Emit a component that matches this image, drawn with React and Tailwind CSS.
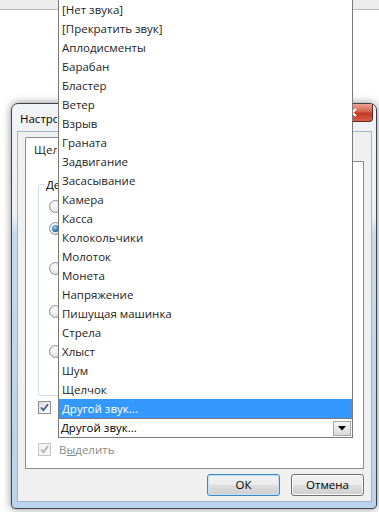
import React from 'react';

const sounds = [
  '[Нет звука]',
  '[Прекратить звук]',
  'Аплодисменты',
  'Барабан',
  'Бластер',
  'Ветер',
  'Взрыв',
  'Граната',
  'Задвигание',
  'Засасывание',
  'Камера',
  'Касса',
  'Колокольчики',
  'Молоток',
  'Монета',
  'Напряжение',
  'Пишущая машинка',
  'Стрела',
  'Хлыст',
  'Шум',
  'Щелчок',
  'Другой звук...',
];

const Radio = ({ checked, className = '' }) => (
  <div className={`w-[13px] h-[13px] rounded-full border border-[#8e9295] bg-[radial-gradient(circle_at_40%_35%,#ffffff,#e2e2e2_70%,#cfcfcf)] flex items-center justify-center ${className}`}>
    {checked && <div className="w-[7px] h-[7px] rounded-full bg-[radial-gradient(circle_at_40%_35%,#9fd4f5,#2a6fa5_60%,#10456e)]" />}
  </div>
);

const CheckBox = ({ disabled }) => (
  <div className={`w-[13px] h-[13px] border flex items-center justify-center ${disabled ? 'border-[#c4c4c4] bg-[#f4f4f4]' : 'border-[#8e8f8f] bg-[linear-gradient(135deg,#dcdcdc,#ffffff)]'}`}>
    <svg width="11" height="11" viewBox="0 0 11 11">
      <path d="M2 5.5 L4.4 8.2 L9 2.3" fill="none" stroke={disabled ? '#b0b0b0' : '#3d5a8a'} strokeWidth="1.8" />
    </svg>
  </div>
);

export default function App() {
  return (
    <div className="relative w-[379px] h-[512px] overflow-hidden bg-white text-[11.5px] text-[#1e1e1e]" style={{ fontFamily: '"Open Sans", "Noto Sans", sans-serif' }}>
      {/* window behind */}
      <div className="h-[10px] bg-[#ededed] border-b border-[#bdbdbd]" />

      {/* dialog */}
      <div className="absolute left-[11px] top-[103px] w-[366px] h-[406px] rounded-t-[7px] rounded-b-[4px] border border-[#3e4247] bg-[linear-gradient(180deg,#f1f3f6_0%,#ebf0f5_28%,#c6d9ee_32%,#bcd3ec_100%)] shadow-[0_0_9px_rgba(0,0,0,0.45)] flex flex-col">
        <div className="h-[27px] flex items-start justify-between pl-[8px]">
          <div className="mt-[6px] w-[37px] overflow-hidden whitespace-nowrap text-black">Настройка</div>
          <div className="mr-[3px] w-[43px] h-[18px] rounded-b-[4px] border border-t-0 border-[#6b2418] bg-[linear-gradient(180deg,#e9a593_0%,#d2634b_45%,#c23a22_55%,#d8604a_100%)] flex items-center justify-center">
            <svg width="10" height="9" viewBox="0 0 10 9">
              <path d="M1 1 L9 8 M9 1 L1 8" stroke="#ffffff" strokeWidth="2" />
            </svg>
          </div>
        </div>

        <div className="ml-[5px] mr-[4px] mb-[6px] flex-1 border border-[#9fb3cb] bg-[#f0f0f0] flex flex-col px-[7px] pt-[5px] pb-[5px]">
          {/* tab header */}
          <div className="flex h-[24px]">
            <div className="w-[80px] h-[25px] bg-white border border-b-0 border-[#898c95] rounded-t-[2px] pl-[8px] pt-[3px] z-10">
              <div className="w-[23px] overflow-hidden whitespace-nowrap">Щелчок</div>
            </div>
          </div>
          {/* tab panel */}
          <div className="flex-1 bg-white border border-[#898c95] flex flex-col pl-[12px] pr-[12px]">
            <fieldset className="mt-[14px] h-[220px] border border-[#d5dfe5] rounded-[3px] pl-[10px]">
              <legend className="ml-[-5px] px-[2px] text-black">
                <div className="w-[12px] overflow-hidden whitespace-nowrap">Действие</div>
              </legend>
              <div className="flex flex-col pt-[7px]">
                <Radio />
                <Radio checked className="mt-[9px]" />
                <Radio className="mt-[27px]" />
                <Radio className="mt-[30px]" />
                <Radio className="mt-[27px]" />
              </div>
            </fieldset>
            <div className="mt-[5px] flex items-center">
              <CheckBox />
            </div>
            <div className="mt-[4px] ml-[20px] w-[295px] h-[20px] border border-[#7a7a7a] bg-white flex items-center justify-between pl-[2px] pr-[1px]">
              <span className="text-black">Другой звук...</span>
              <div className="w-[18px] h-[15px] border border-[#a7a7a7] bg-[linear-gradient(180deg,#f6f6f6,#dadada)] flex items-center justify-center">
                <svg width="8" height="5" viewBox="0 0 8 5">
                  <path d="M0 0 L8 0 L4 4.5 Z" fill="#000" />
                </svg>
              </div>
            </div>
            <div className="mt-[3px] flex items-center">
              <CheckBox disabled />
              <span className="ml-[8px] text-[#8a8a8a]">В<span className="underline">ы</span>делить</span>
            </div>
          </div>
          {/* buttons */}
          <div className="mt-[5px] flex justify-end gap-[11px]">
            <button className="w-[73px] h-[22px] rounded-[3px] border border-[#3d86c2] shadow-[inset_0_0_0_1px_#bfe4fa] bg-[linear-gradient(180deg,#f2f2f2_0%,#ebebeb_48%,#dddddd_52%,#cfcfcf_100%)] text-black">ОК</button>
            <button className="w-[73px] h-[22px] rounded-[3px] border border-[#707070] shadow-[inset_0_0_0_1px_#fcfcfc] bg-[linear-gradient(180deg,#f2f2f2_0%,#ebebeb_48%,#dddddd_52%,#cfcfcf_100%)] text-black">Отмена</button>
          </div>
        </div>
      </div>

      {/* open dropdown list */}
      <div className="absolute z-20 left-[58px] top-0 w-[295px] h-[418px] bg-white border-x border-[#7a7a7a] flex flex-col">
        {sounds.map((s, i) => (
          <div
            key={i}
            className={`h-[19px] leading-[19px] pl-[3px] whitespace-nowrap ${i === sounds.length - 1 ? 'bg-[#3399ff] text-white' : ''}`}
          >
            {s}
          </div>
        ))}
      </div>
    </div>
  );
}
